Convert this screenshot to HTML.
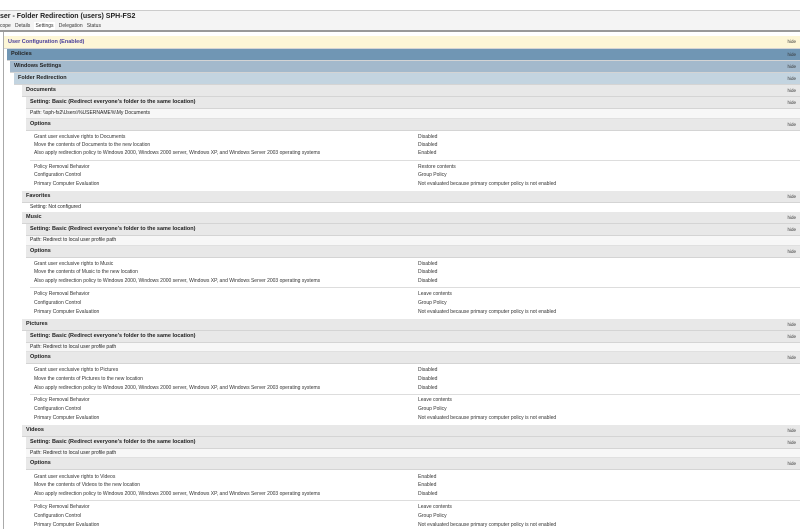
<!DOCTYPE html><html><head><style>
body{margin:0;width:800px;height:529px;overflow:hidden;background:#fff;font-family:"Liberation Sans",sans-serif;position:relative}
div{position:absolute;box-sizing:border-box}
.r{right:0;border-bottom:1px solid #d4d4d4;font-size:5.5px;font-weight:bold;color:#222;padding-left:4px}
.r span{position:absolute;right:4px;bottom:0px;font-weight:normal;font-size:4.5px;color:#333}
.g{background:#e8e8e8}
.p{background:#f7f7f7;font-weight:normal;font-size:5px;border-bottom:1px solid #e0e0e0}
.t{font-size:5px;color:#333;white-space:nowrap}
.sep{left:30px;right:0;height:1px;background:#ddd}
</style></head><body>
<div style="left:0;top:10px;right:0;height:1px;background:#ccc"></div>
<div style="left:0;top:11px;right:0;height:21px;background:#f4f4f4;border-bottom:2px solid #999"></div>
<div class="t" style="left:0;top:13px;font-size:7px;font-weight:bold;color:#222">ser - Folder Redirection (users) SPH-FS2</div>
<div class="t" style="left:0;top:23px;font-size:5px">cope&nbsp;&nbsp; Details&nbsp;&nbsp; <span style="background:#fff;padding:1px 1px">Settings</span>&nbsp;&nbsp; Delegation&nbsp;&nbsp; Status</div>
<div style="left:3px;top:32px;width:1px;height:497px;background:#aaa"></div>

<div class="r" style="left:4px;top:36px;height:13px;background:#fdf6d6;color:#4a3f9a;line-height:12px">User Configuration (Enabled)<span>hide</span></div>
<div class="r" style="left:7px;top:49px;height:12px;background:#7096b4;line-height:10px">Policies<span>hide</span></div>
<div class="r" style="left:10px;top:61px;height:12px;background:#a3b9cc;line-height:10px">Windows Settings<span>hide</span></div>
<div class="r" style="left:14px;top:73px;height:12px;background:#c3d4e0;line-height:10px">Folder Redirection<span>hide</span></div>

<div class="r g" style="left:22px;top:85px;height:12px;line-height:10px">Documents<span>hide</span></div>
<div class="r g" style="left:26px;top:97px;height:12px;line-height:10px">Setting: Basic (Redirect everyone's folder to the same location)<span>hide</span></div>
<div class="r p" style="left:26px;top:109px;height:10px;line-height:9px">Path: \\sph-fs2\Users\%USERNAME%\My Documents</div>
<div class="r g" style="left:26px;top:119px;height:12px;line-height:10px">Options<span>hide</span></div>
<div class="t" style="left:34px;top:134px">Grant user exclusive rights to Documents</div><div class="t" style="left:418px;top:134px">Disabled</div>
<div class="t" style="left:34px;top:142px">Move the contents of Documents to the new location</div><div class="t" style="left:418px;top:142px">Disabled</div>
<div class="t" style="left:34px;top:150px">Also apply redirection policy to Windows 2000, Windows 2000 server, Windows XP, and Windows Server 2003 operating systems</div><div class="t" style="left:418px;top:150px">Enabled</div>
<div class="sep" style="top:160px"></div>
<div class="t" style="left:34px;top:164px">Policy Removal Behavior</div><div class="t" style="left:418px;top:164px">Restore contents</div>
<div class="t" style="left:34px;top:172px">Configuration Control</div><div class="t" style="left:418px;top:172px">Group Policy</div>
<div class="t" style="left:34px;top:181px">Primary Computer Evaluation</div><div class="t" style="left:418px;top:181px">Not evaluated because primary computer policy is not enabled</div>

<div class="r g" style="left:22px;top:191px;height:12px;line-height:10px">Favorites<span>hide</span></div>
<div class="r p" style="left:26px;top:203px;height:9px;line-height:9px;border:none;background:#fff">Setting: Not configured</div>

<div class="r g" style="left:22px;top:212px;height:12px;line-height:10px">Music<span>hide</span></div>
<div class="r g" style="left:26px;top:224px;height:12px;line-height:10px">Setting: Basic (Redirect everyone's folder to the same location)<span>hide</span></div>
<div class="r p" style="left:26px;top:236px;height:10px;line-height:9px">Path: Redirect to local user profile path</div>
<div class="r g" style="left:26px;top:246px;height:12px;line-height:10px">Options<span>hide</span></div>
<div class="t" style="left:34px;top:261px">Grant user exclusive rights to Music</div><div class="t" style="left:418px;top:261px">Disabled</div>
<div class="t" style="left:34px;top:269px">Move the contents of Music to the new location</div><div class="t" style="left:418px;top:269px">Disabled</div>
<div class="t" style="left:34px;top:278px">Also apply redirection policy to Windows 2000, Windows 2000 server, Windows XP, and Windows Server 2003 operating systems</div><div class="t" style="left:418px;top:278px">Disabled</div>
<div class="sep" style="top:287px"></div>
<div class="t" style="left:34px;top:291px">Policy Removal Behavior</div><div class="t" style="left:418px;top:291px">Leave contents</div>
<div class="t" style="left:34px;top:300px">Configuration Control</div><div class="t" style="left:418px;top:300px">Group Policy</div>
<div class="t" style="left:34px;top:309px">Primary Computer Evaluation</div><div class="t" style="left:418px;top:309px">Not evaluated because primary computer policy is not enabled</div>

<div class="r g" style="left:22px;top:319px;height:12px;line-height:10px">Pictures<span>hide</span></div>
<div class="r g" style="left:26px;top:331px;height:12px;line-height:10px">Setting: Basic (Redirect everyone's folder to the same location)<span>hide</span></div>
<div class="r p" style="left:26px;top:343px;height:9px;line-height:8px">Path: Redirect to local user profile path</div>
<div class="r g" style="left:26px;top:352px;height:12px;line-height:10px">Options<span>hide</span></div>
<div class="t" style="left:34px;top:367px">Grant user exclusive rights to Pictures</div><div class="t" style="left:418px;top:367px">Disabled</div>
<div class="t" style="left:34px;top:376px">Move the contents of Pictures to the new location</div><div class="t" style="left:418px;top:376px">Disabled</div>
<div class="t" style="left:34px;top:385px">Also apply redirection policy to Windows 2000, Windows 2000 server, Windows XP, and Windows Server 2003 operating systems</div><div class="t" style="left:418px;top:385px">Disabled</div>
<div class="sep" style="top:394px"></div>
<div class="t" style="left:34px;top:397px">Policy Removal Behavior</div><div class="t" style="left:418px;top:397px">Leave contents</div>
<div class="t" style="left:34px;top:406px">Configuration Control</div><div class="t" style="left:418px;top:406px">Group Policy</div>
<div class="t" style="left:34px;top:415px">Primary Computer Evaluation</div><div class="t" style="left:418px;top:415px">Not evaluated because primary computer policy is not enabled</div>

<div class="r g" style="left:22px;top:425px;height:12px;line-height:10px">Videos<span>hide</span></div>
<div class="r g" style="left:26px;top:437px;height:12px;line-height:10px">Setting: Basic (Redirect everyone's folder to the same location)<span>hide</span></div>
<div class="r p" style="left:26px;top:449px;height:9px;line-height:8px">Path: Redirect to local user profile path</div>
<div class="r g" style="left:26px;top:458px;height:12px;line-height:10px">Options<span>hide</span></div>
<div class="t" style="left:34px;top:474px">Grant user exclusive rights to Videos</div><div class="t" style="left:418px;top:474px">Enabled</div>
<div class="t" style="left:34px;top:482px">Move the contents of Videos to the new location</div><div class="t" style="left:418px;top:482px">Enabled</div>
<div class="t" style="left:34px;top:491px">Also apply redirection policy to Windows 2000, Windows 2000 server, Windows XP, and Windows Server 2003 operating systems</div><div class="t" style="left:418px;top:491px">Disabled</div>
<div class="sep" style="top:500px"></div>
<div class="t" style="left:34px;top:504px">Policy Removal Behavior</div><div class="t" style="left:418px;top:504px">Leave contents</div>
<div class="t" style="left:34px;top:513px">Configuration Control</div><div class="t" style="left:418px;top:513px">Group Policy</div>
<div class="t" style="left:34px;top:522px">Primary Computer Evaluation</div><div class="t" style="left:418px;top:522px">Not evaluated because primary computer policy is not enabled</div>
</body></html>
